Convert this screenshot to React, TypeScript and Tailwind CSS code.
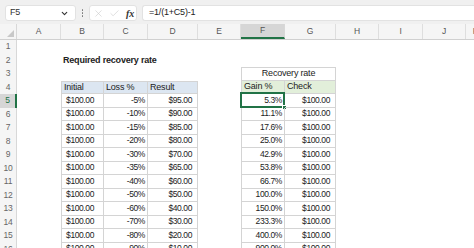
import { X, Check, ChevronDown } from "lucide-react";

const LETTERS = ["A", "B", "C", "D", "E", "F", "G", "H", "I", "J", "K"];
const W = [
  "w-[44px]",
  "w-[43px]",
  "w-[44px]",
  "w-[50px]",
  "w-[43px]",
  "w-[44px]",
  "w-[51px]",
  "w-[43px]",
  "w-[44px]",
  "w-[43px]",
  "w-[20px]",
];

const LOSS = [5, 10, 15, 20, 30, 35, 40, 50, 60, 70, 80, 90];

const line = "border-[#d4d4d4]";
const num = "text-[8.5px] tracking-[-0.4px]";

function Cell({
  col,
  className = "",
  children,
}: {
  col: number;
  className?: string;
  children?: React.ReactNode;
}) {
  return (
    <div
      className={`${W[col]} relative flex h-full shrink-0 items-center overflow-visible whitespace-nowrap ${className}`}
    >
      {children}
    </div>
  );
}

function RowHead({ n, active }: { n: number; active?: boolean }) {
  return (
    <div
      className={`flex h-full w-[17px] shrink-0 items-center justify-center border-r text-[8.5px] ${
        active
          ? "border-r-2 border-[#217346] bg-[#d6d6d6] text-[#217346]"
          : "border-[#d8d8d8] bg-[#f5f5f5] text-[#666]"
      }`}
    >
      {n}
    </div>
  );
}

function renderRow(n: number) {
  const cells: React.ReactNode[] = [];
  const i = n - 5;
  for (let c = 0; c < 11; c++) {
    let node: React.ReactNode = <Cell key={c} col={c} />;
    if (n === 2 && c === 1) {
      node = (
        <Cell key={c} col={c} className="pl-[2px] font-bold">
          Required recovery rate
        </Cell>
      );
    }
    if (n === 4 && c >= 1 && c <= 3) {
      node = (
        <Cell
          key={c}
          col={c}
          className={`border-y border-r ${line} bg-[#dce6f1] pl-[2px] ${c === 1 ? "border-l" : ""}`}
        >
          {["Initial", "Loss %", "Result"][c - 1]}
        </Cell>
      );
    }
    if (n === 4 && (c === 5 || c === 6)) {
      node = (
        <Cell
          key={c}
          col={c}
          className={`border-b border-r ${line} bg-[#e2efda] pl-[2px] ${c === 5 ? "border-l" : ""}`}
        >
          {c === 5 ? "Gain %" : "Check"}
        </Cell>
      );
    }
    if (n >= 5 && c >= 1 && c <= 3) {
      const l = LOSS[i];
      const text = c === 1 ? "$100.00" : c === 2 ? `-${l}%` : `$${100 - l}.00`;
      const pad = c === 1 ? "pr-[9px]" : c === 2 ? "pr-[2px]" : "pr-[5px]";
      node = (
        <Cell
          key={c}
          col={c}
          className={`justify-end border-b border-r ${line} ${num} ${pad} ${c === 1 ? "border-l" : ""}`}
        >
          {text}
        </Cell>
      );
    }
    if (n >= 5 && (c === 5 || c === 6)) {
      const l = LOSS[i] / 100;
      const gain = ((1 / (1 - l) - 1) * 100).toFixed(1);
      node = (
        <Cell
          key={c}
          col={c}
          className={`justify-end border-b border-r ${line} ${num} ${c === 5 ? "border-l pr-[2px]" : "pr-[5px]"}`}
        >
          {c === 5 ? `${gain}%` : "$100.00"}
          {n === 5 && c === 5 && (
            <>
              <div className="absolute -top-[2px] -left-[2px] -right-[1px] -bottom-[1px] border-2 border-[#217346]" />
              <div className="absolute -bottom-[3px] -right-[3px] h-[5px] w-[5px] border border-white bg-[#217346]" />
            </>
          )}
        </Cell>
      );
    }
    cells.push(node);
  }
  if (n === 3) {
    cells.splice(
      5,
      2,
      <div
        key="merged"
        className={`flex h-full w-[95px] shrink-0 items-center justify-center border ${line}`}
      >
        Recovery rate
      </div>
    );
  }
  return cells;
}

export default function App() {
  const rows = Array.from({ length: 16 }, (_, k) => k + 1);
  return (
    <div className="h-[248px] w-[474px] overflow-hidden bg-white font-['Liberation_Sans',_sans-serif] text-[9px] tracking-[-0.2px] text-[#222]">
      {/* formula bar */}
      <div className="flex h-[24px] items-start bg-[#f0f0f0] pl-[5px] pt-[5px]">
        <div className="flex h-[16px] w-[71px] items-center justify-between rounded-[3px] border border-[#e2e2e2] bg-white pl-[4px] pr-[6px] text-[#333]">
          <span>F5</span>
          <ChevronDown className="h-[9px] w-[9px] text-[#333]" strokeWidth={3} />
        </div>
        <div className="flex h-[16px] w-[13px] flex-col items-center justify-center gap-[1.5px]">
          <span className="h-[1.5px] w-[1.5px] rounded-full bg-[#777]" />
          <span className="h-[1.5px] w-[1.5px] rounded-full bg-[#777]" />
          <span className="h-[1.5px] w-[1.5px] rounded-full bg-[#777]" />
        </div>
        <div className="flex h-[16px] w-[48px] items-center rounded-[3px] border border-[#e2e2e2] bg-white pl-[3px]">
          <X className="h-[11px] w-[11px] text-[#c8c8c8]" strokeWidth={1.25} />
          <Check className="ml-[5px] h-[11px] w-[11px] text-[#c8c8c8]" strokeWidth={1.25} />
          <span className="ml-[6px] font-['Liberation_Serif',_serif] text-[10px] font-bold italic text-[#333]">
            fx
          </span>
        </div>
        <div className="ml-[5px] flex h-[16px] flex-1 items-center rounded-l-[3px] border border-r-0 border-[#e2e2e2] bg-white pl-[6px] text-[#222]">
          =1/(1+C5)-1
        </div>
      </div>
      {/* column headers */}
      <div className="flex h-[16px] border-b border-[#d0d0d0] bg-[#f5f5f5] text-[8.5px] text-[#555]">
        <div className="relative w-[17px] shrink-0 border-r border-[#d8d8d8]">
          <div className="absolute bottom-[2px] right-[2px] h-0 w-0 border-b-[7px] border-l-[7px] border-b-[#c8c8c8] border-l-transparent" />
        </div>
        {LETTERS.map((L, c) => (
          <div
            key={L}
            className={`${W[c]} flex shrink-0 items-center justify-center border-r ${
              c === 5 ? "border-b-2 border-[#d8d8d8] border-b-[#217346] bg-[#d6d6d6]" : "border-[#dedede]"
            }`}
          >
            {L}
          </div>
        ))}
      </div>
      {/* grid */}
      {rows.map((n) => (
        <div key={n} className="flex h-[13.5px]">
          <RowHead n={n} active={n === 5} />
          {renderRow(n)}
        </div>
      ))}
    </div>
  );
}
